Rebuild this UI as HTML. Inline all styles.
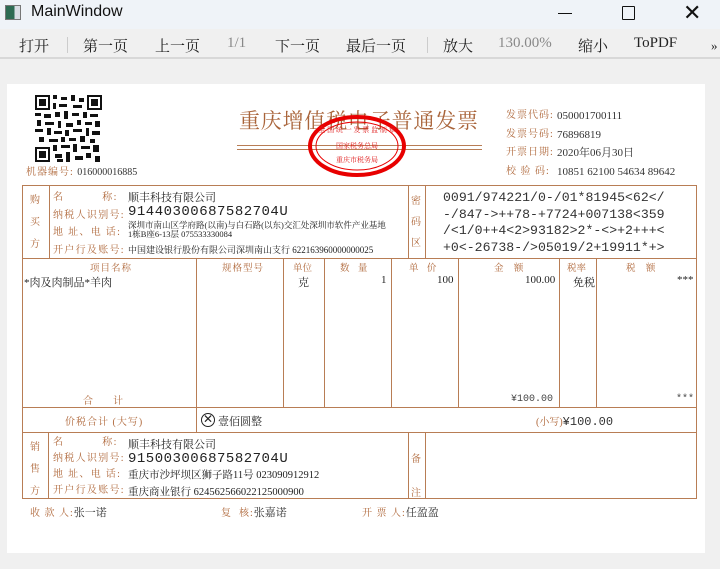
<!DOCTYPE html>
<html><head><meta charset="utf-8"><style>
*{margin:0;padding:0;box-sizing:border-box}
body{width:720px;height:569px;background:#f0f0f0;font-family:"Liberation Serif","Noto Serif CJK SC",serif;position:relative;overflow:hidden;color:#222}
.a{position:absolute;white-space:nowrap}
.br{color:#b0693c}
.ln{position:absolute;background:#b87d55}
.s{font-family:"Liberation Sans","Noto Sans CJK SC",sans-serif}
.m{font-family:"Liberation Mono","DejaVu Sans Mono",monospace}
.tb span{position:absolute;top:35px;font-size:15px}
</style></head><body>
<div class="a" style="left:0;top:0;width:720px;height:29px;background:#eff3f8"></div>
<div class="a" style="left:5px;top:5px;width:16px;height:15px;border:1px solid #777;background:linear-gradient(90deg,#2d6b53 60%,#d8dde4 60%)"></div>
<div class="a s" style="left:31px;top:3px;font-size:16px;color:#111">MainWindow</div>
<div class="a" style="left:558px;top:13px;width:14px;height:1px;background:#111"></div>
<div class="a" style="left:622px;top:6px;width:13px;height:14px;border:1.3px solid #111;border-radius:1px"></div>
<div class="a s" style="left:683px;top:0px;font-size:22px;font-weight:300;color:#111">✕</div>
<div class="a" style="left:0;top:29px;width:720px;height:49px;background:#f0f0f0"></div>
<div class="a" style="left:0;top:57px;width:720px;height:2px;background:#d8d8d8"></div>
<div class="tb">
<span style="left:19px">打开</span>
<div class="a" style="left:67px;top:37px;width:1px;height:16px;background:#ccc"></div>
<span style="left:83px">第一页</span>
<span style="left:155px">上一页</span>
<span style="left:227px;color:#888">1/1</span>
<span style="left:275px">下一页</span>
<span style="left:346px">最后一页</span>
<div class="a" style="left:427px;top:37px;width:1px;height:16px;background:#ccc"></div>
<span style="left:443px">放大</span>
<span style="left:498px;color:#888">130.00%</span>
<span style="left:578px">缩小</span>
<span style="left:634px">ToPDF</span>
<span style="left:711px;font-size:13px;top:38px">»</span>
</div>
<div class="a" style="left:7px;top:84px;width:698px;height:469px;background:#fff"></div>
<!-- QR -->
<svg class="a" style="left:35px;top:95px" width="67" height="67" viewBox="0 0 67 67">
<rect width="67" height="67" fill="#fff"/>
<g fill="#111">
<rect x="0" y="0" width="15" height="15"/><rect x="52" y="0" width="15" height="15"/><rect x="0" y="52" width="15" height="15"/>
</g>
<g fill="#fff"><rect x="2" y="2" width="11" height="11"/><rect x="54" y="2" width="11" height="11"/><rect x="2" y="54" width="11" height="11"/></g>
<g fill="#111"><rect x="4" y="4" width="7" height="7"/><rect x="56" y="4" width="7" height="7"/><rect x="4" y="56" width="7" height="7"/>
<path d="M18 0h4v4h-4zM26 2h6v3h-6zM36 0h4v6h-4zM44 3h5v4h-5zM18 8h3v6h-3zM24 9h8v3h-8zM38 10h9v3h-9zM0 18h6v3h-6zM9 19h7v4h-7zM20 17h5v5h-5zM29 16h4v8h-4zM37 18h7v3h-7zM48 17h4v6h-4zM55 19h8v3h-8zM2 25h4v6h-4zM10 27h9v3h-9zM23 26h3v7h-3zM31 28h7v4h-7zM42 25h4v5h-4zM50 27h7v3h-7zM60 26h5v6h-5zM0 34h8v3h-8zM12 33h4v7h-4zM19 36h8v3h-8zM30 35h4v6h-4zM38 34h9v3h-9zM51 33h3v8h-3zM57 36h8v4h-8zM4 42h5v5h-5zM14 44h9v3h-9zM26 42h4v5h-4zM34 43h7v3h-7zM45 41h5v6h-5zM55 44h5v4h-5zM18 50h4v6h-4zM26 50h9v3h-9zM38 49h4v8h-4zM46 51h9v3h-9zM58 50h6v7h-6zM20 59h7v4h-7zM31 57h4v10h-4zM40 61h8v4h-8zM51 58h5v5h-5zM60 61h5v6h-5zM22 64h6v3h-6z"/></g>
</svg>
<div class="a br" style="left:26px;top:163px;font-size:10px;letter-spacing:1px">机器编号: <span style="color:#333;letter-spacing:0">016000016885</span></div>
<div class="a br" style="left:239px;top:105px;font-size:21px;letter-spacing:0.8px;color:#a9643a">重庆增值税电子普通发票</div>
<div class="ln" style="left:237px;top:145px;width:245px;height:1px"></div>
<div class="ln" style="left:237px;top:149px;width:245px;height:1px"></div>
<svg class="a" style="left:305px;top:112px" width="105" height="70">
<ellipse cx="52" cy="34" rx="47" ry="29" fill="none" stroke="#e80000" stroke-width="4"/>
<ellipse cx="52" cy="34" rx="41" ry="24" fill="none" stroke="#e80000" stroke-width="1"/>
<text x="52" y="20" fill="#e02020" font-size="7" text-anchor="middle" font-family="Noto Serif CJK SC">全 国 统 一 发 票 监 制 章</text>
<text x="52" y="36" fill="#e02020" font-size="7" text-anchor="middle" font-family="Noto Serif CJK SC">国家税务总局</text>
<text x="52" y="50" fill="#e02020" font-size="7" text-anchor="middle" font-family="Noto Serif CJK SC">重庆市税务局</text>
</svg>
<div class="a br" style="left:506px;top:107px;font-size:10px;line-height:18.5px;letter-spacing:1px">发票代码:<br>发票号码:<br>开票日期:<br>校 验 码:</div>
<div class="a" style="left:557px;top:107px;font-size:11px;line-height:18.5px;color:#333">050001700111<br>76896819<br>2020年06月30日<br>10851 62100 54634 89642</div>
<!-- table -->
<div class="a" style="left:22px;top:185px;width:675px;height:314px;border:1px solid #b87d55"></div>
<div class="ln" style="left:22px;top:258px;width:675px;height:1px"></div>
<div class="ln" style="left:22px;top:407px;width:675px;height:1px"></div>
<div class="ln" style="left:22px;top:432px;width:675px;height:1px"></div>
<div class="ln" style="left:49px;top:185px;width:1px;height:73px"></div>
<div class="ln" style="left:408px;top:185px;width:1px;height:73px"></div>
<div class="ln" style="left:425px;top:185px;width:1px;height:73px"></div>
<div class="ln" style="left:48px;top:432px;width:1px;height:67px"></div>
<div class="ln" style="left:408px;top:432px;width:1px;height:67px"></div>
<div class="ln" style="left:425px;top:432px;width:1px;height:67px"></div>
<div class="ln" style="left:196px;top:258px;width:1px;height:174px"></div>
<div class="ln" style="left:283px;top:258px;width:1px;height:149px"></div>
<div class="ln" style="left:324px;top:258px;width:1px;height:149px"></div>
<div class="ln" style="left:391px;top:258px;width:1px;height:149px"></div>
<div class="ln" style="left:458px;top:258px;width:1px;height:149px"></div>
<div class="ln" style="left:559px;top:258px;width:1px;height:149px"></div>
<div class="ln" style="left:596px;top:258px;width:1px;height:149px"></div>
<div class="a br" style="left:30px;top:190px;font-size:10px;line-height:22px">购<br>买<br>方</div>
<div class="a br" style="left:53px;top:189px;font-size:10px;line-height:17.5px;letter-spacing:1.3px">名&nbsp;&nbsp;&nbsp;&nbsp;&nbsp;&nbsp;&nbsp;&nbsp;&nbsp;&nbsp;称:<br>纳税人识别号:<br>地 址、电 话:<br>开户行及账号:</div>
<div class="a" style="left:128px;top:189px;font-size:11px">顺丰科技有限公司</div>
<div class="a m" style="left:128px;top:204px;font-size:14px;letter-spacing:0.5px">91440300687582704U</div>
<div class="a" style="left:128px;top:221px;font-size:8.5px;line-height:9px">深圳市南山区学府路(以南)与白石路(以东)交汇处深圳市软件产业基地<br>1栋B座6-13层 075533330084</div>
<div class="a" style="left:128px;top:243px;font-size:9px">中国建设银行股份有限公司深圳南山支行 622163960000000025</div>
<div class="a br" style="left:411px;top:191px;font-size:10px;line-height:21px">密<br>码<br>区</div>
<div class="a m" style="left:443px;top:190px;font-size:13.2px;line-height:16.5px;color:#333">0091/974221/0-/01*81945&lt;62&lt;/<br>-/847-&gt;++78-+7724+007138&lt;359<br>/&lt;1/0++4&lt;2&gt;93182&gt;2*-&lt;&gt;+2+++&lt;<br>+0&lt;-26738-/&gt;05019/2+19911*+&gt;</div>
<!-- items header -->
<div class="a br" style="top:260px;font-size:9.5px;left:90px;letter-spacing:1px">项目名称</div>
<div class="a br" style="top:260px;font-size:9.5px;left:222px;letter-spacing:1px">规格型号</div>
<div class="a br" style="top:260px;font-size:9.5px;left:293px">单位</div>
<div class="a br" style="top:260px;font-size:9.5px;left:340px;letter-spacing:3px">数 量</div>
<div class="a br" style="top:260px;font-size:9.5px;left:409px;letter-spacing:3px">单 价</div>
<div class="a br" style="top:260px;font-size:9.5px;left:494px;letter-spacing:4px">金 额</div>
<div class="a br" style="top:260px;font-size:9.5px;left:567px">税率</div>
<div class="a br" style="top:260px;font-size:9.5px;left:626px;letter-spacing:4px">税 额</div>
<div class="a" style="top:274px;font-size:11px;left:24px">*肉及肉制品*羊肉</div>
<div class="a" style="top:274px;font-size:11px;left:298px">克</div>
<div class="a" style="top:274px;font-size:11px;left:381px">1</div>
<div class="a" style="top:274px;font-size:11px;left:437px">100</div>
<div class="a" style="top:274px;font-size:11px;left:525px">100.00</div>
<div class="a" style="top:274px;font-size:11px;left:573px">免税</div>
<div class="a" style="top:274px;font-size:11px;left:677px">***</div>
<div class="a br" style="top:392px;font-size:10px;left:83px">合&nbsp;&nbsp;&nbsp;&nbsp;&nbsp;&nbsp;&nbsp;&nbsp;计</div>
<div class="a m" style="top:394px;font-size:10px;left:511px;color:#444">¥100.00</div>
<div class="a m" style="top:394px;font-size:10px;left:676px;color:#444">***</div>
<div class="a br" style="top:413px;font-size:10px;left:65px;letter-spacing:1px">价税合计 (大写)</div>
<div class="a" style="left:201px;top:413px;width:14px;height:14px;border:1.2px solid #222;border-radius:50%;font-size:12px;line-height:11px;text-align:center;font-family:'DejaVu Sans'">✕</div>
<div class="a" style="top:413px;font-size:11px;left:218px">壹佰圆整</div>
<div class="a br" style="top:413px;font-size:10px;left:536px">(小写)<span class="m" style="color:#333;font-size:12px">¥100.00</span></div>
<!-- seller -->
<div class="a br" style="left:30px;top:437px;font-size:10px;line-height:22px">销<br>售<br>方</div>
<div class="a br" style="left:53px;top:435px;font-size:10px;line-height:16px;letter-spacing:1.3px">名&nbsp;&nbsp;&nbsp;&nbsp;&nbsp;&nbsp;&nbsp;&nbsp;&nbsp;&nbsp;称:<br>纳税人识别号:<br>地 址、电 话:<br>开户行及账号:</div>
<div class="a" style="left:128px;top:436px;font-size:11px">顺丰科技有限公司</div>
<div class="a m" style="left:128px;top:451px;font-size:14px;letter-spacing:0.5px">91500300687582704U</div>
<div class="a" style="left:128px;top:467px;font-size:10.5px">重庆市沙坪坝区狮子路11号 023090912912</div>
<div class="a" style="left:128px;top:484px;font-size:10.5px">重庆商业银行 624562566022125000900</div>
<div class="a br" style="left:411px;top:443px;font-size:10px;line-height:34px">备<br>注</div>
<div class="a br" style="left:30px;top:504px;font-size:10px;letter-spacing:1px">收 款 人:<span style="color:#333;font-size:11px;letter-spacing:0">张一诺</span></div>
<div class="a br" style="left:221px;top:504px;font-size:10px;letter-spacing:1px">复&nbsp;&nbsp;核:<span style="color:#333;font-size:11px;letter-spacing:0">张嘉诺</span></div>
<div class="a br" style="left:362px;top:504px;font-size:10px;letter-spacing:1px">开 票 人:<span style="color:#333;font-size:11px;letter-spacing:0">任盈盈</span></div>
</body></html>
